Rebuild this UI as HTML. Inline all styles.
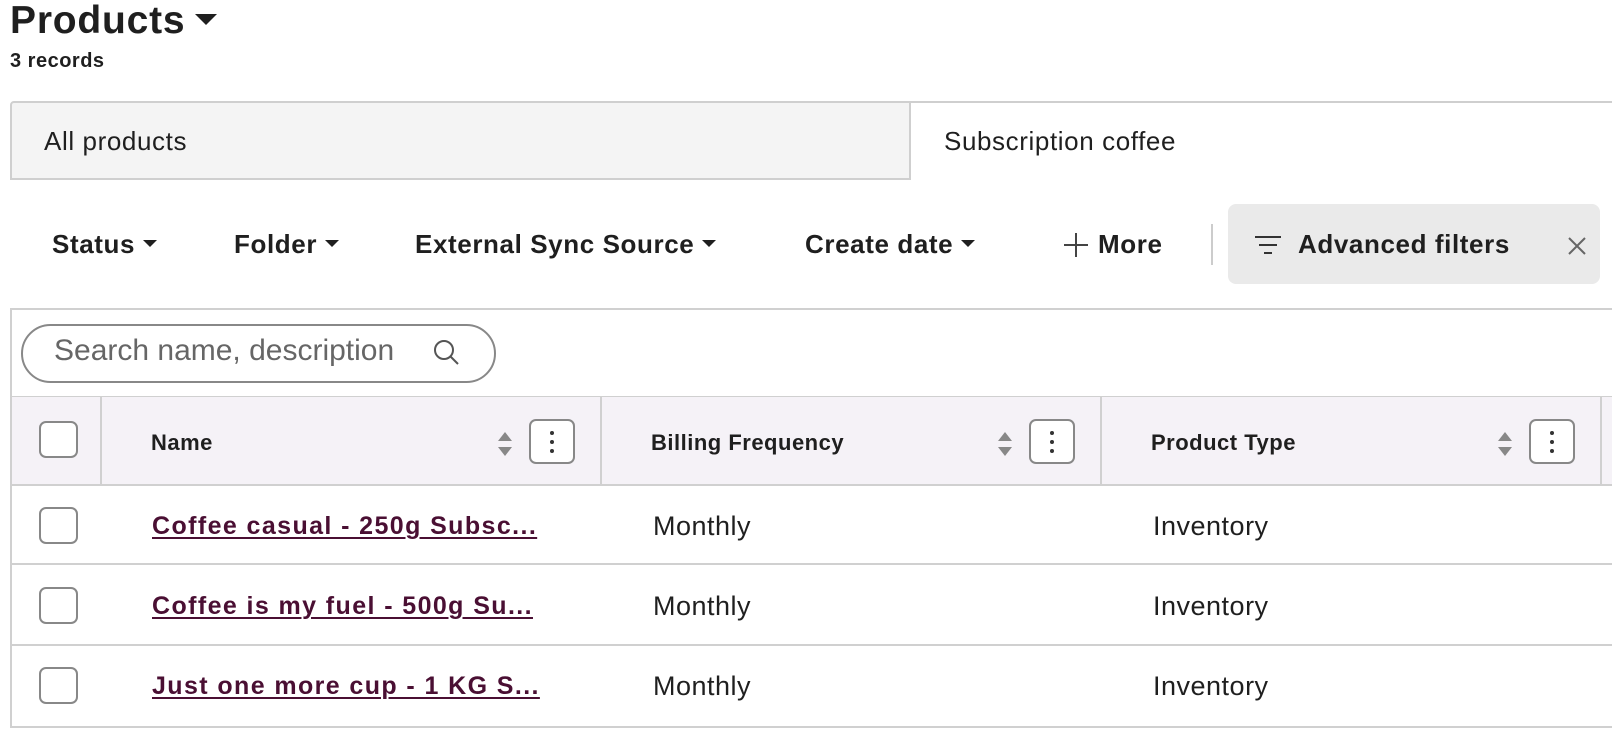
<!DOCTYPE html>
<html><head><meta charset="utf-8"><style>
*{box-sizing:border-box;margin:0;padding:0}
body{width:1612px;height:730px;overflow:hidden;background:#fff;font-family:"Liberation Sans",sans-serif;color:#1f1f1f;position:relative}
.a{position:absolute;white-space:nowrap}
.caret{display:inline-block;width:0;height:0;border-left:7px solid transparent;border-right:7px solid transparent;border-top:7px solid #1f1f1f;vertical-align:middle;margin-left:8px;position:relative;top:-3px}
.f{font-weight:bold;font-size:26px;top:229px;letter-spacing:0.6px}
.cb{position:absolute;width:39px;height:37px;border:2px solid #888;border-radius:7px;background:#fff}
.th{position:absolute;top:397px;height:87px;background:#f5f2f7;border-right:2px solid #d0d0d0}
.hl{position:absolute;font-weight:bold;font-size:22px;top:430px;letter-spacing:0.5px}
.sort{position:absolute;top:430px;width:14px;height:28px}
.dots{position:absolute;top:419px;width:46px;height:45px;border:2px solid #888;border-radius:7px;background:#fff}
.dots i{position:absolute;left:19px;width:4px;height:4px;border-radius:2px;background:#333}
.lnk{position:absolute;left:152px;font-weight:bold;font-size:25px;letter-spacing:1.4px;color:#4a0f33;text-decoration:underline;text-decoration-thickness:2px;text-underline-offset:3px}
.t{position:absolute;font-size:27px;letter-spacing:0.5px}
.hr{position:absolute;left:10px;width:1602px;height:2px;background:#d0d0d0}
</style></head><body>
<div class="a" style="left:10px;top:0;font-size:39px;font-weight:bold;line-height:42px;letter-spacing:0.8px">Products<span class="caret" style="border-left-width:11px;border-right-width:11px;border-top-width:11px;margin-left:10px"></span></div>
<div class="a" style="left:10px;top:50px;font-size:20px;font-weight:bold;letter-spacing:0.5px">3 records</div>

<div class="a" style="left:10px;top:101px;width:901px;height:79px;background:#f4f4f4;border:2px solid #cfcfcf;border-radius:4px 0 0 0"></div>
<div class="a" style="left:910px;top:101px;width:702px;height:2px;background:#cfcfcf"></div>
<div class="a" style="left:44px;top:126px;font-size:26px;letter-spacing:0.6px">All products</div>
<div class="a" style="left:944px;top:126px;font-size:26px;letter-spacing:0.6px">Subscription coffee</div>

<div class="a f" style="left:52px">Status<span class="caret"></span></div>
<div class="a f" style="left:234px">Folder<span class="caret"></span></div>
<div class="a f" style="left:415px">External Sync Source<span class="caret"></span></div>
<div class="a f" style="left:805px">Create date<span class="caret"></span></div>
<svg class="a" style="left:1063px;top:232px" width="26" height="26"><path d="M13 1V25M1 13H25" stroke="#444" stroke-width="2"/></svg>
<div class="a f" style="left:1098px">More</div>
<div class="a" style="left:1211px;top:224px;width:2px;height:41px;background:#ccc"></div>
<div class="a" style="left:1228px;top:204px;width:372px;height:80px;background:#eaeaea;border-radius:8px"></div>
<svg class="a" style="left:1254px;top:234px" width="28" height="22"><path d="M1 3h26M5 11h18M10 19h8" stroke="#333" stroke-width="2"/></svg>
<div class="a f" style="left:1298px">Advanced filters</div>
<svg class="a" style="left:1567px;top:236px" width="20" height="20"><path d="M2 2L18 18M18 2L2 18" stroke="#666" stroke-width="2"/></svg>

<div class="a" style="left:10px;top:308px;width:1604px;height:420px;border:2px solid #d0d0d0;border-right:none"></div>
<div class="a" style="left:21px;top:324px;width:475px;height:59px;border:2px solid #888;border-radius:30px"></div>
<div class="a" style="left:54px;top:334px;font-size:30px;color:#666;width:352px;overflow:hidden">Search name, description</div>
<svg class="a" style="left:432px;top:338px" width="30" height="30"><circle cx="12" cy="12" r="9" fill="none" stroke="#555" stroke-width="2"/><path d="M18.5 18.5L26 26" stroke="#555" stroke-width="2"/></svg>

<div class="hr" style="top:396px"></div>
<div class="th" style="left:12px;width:90px"></div>
<div class="th" style="left:102px;width:500px"></div>
<div class="th" style="left:602px;width:500px"></div>
<div class="th" style="left:1102px;width:500px"></div>
<div class="th" style="left:1602px;width:12px;border:none"></div>
<div class="cb" style="left:39px;top:421px"></div>
<div class="hl" style="left:151px">Name</div>
<div class="hl" style="left:651px">Billing Frequency</div>
<div class="hl" style="left:1151px">Product Type</div>
<svg class="sort" style="left:498px"><path d="M0 11L7 2L14 11zM0 17L7 26L14 17z" fill="#888"/></svg>
<svg class="sort" style="left:998px"><path d="M0 11L7 2L14 11zM0 17L7 26L14 17z" fill="#888"/></svg>
<svg class="sort" style="left:1498px"><path d="M0 11L7 2L14 11zM0 17L7 26L14 17z" fill="#888"/></svg>
<div class="dots" style="left:529px"><i style="top:10px"></i><i style="top:19px"></i><i style="top:28px"></i></div>
<div class="dots" style="left:1029px"><i style="top:10px"></i><i style="top:19px"></i><i style="top:28px"></i></div>
<div class="dots" style="left:1529px"><i style="top:10px"></i><i style="top:19px"></i><i style="top:28px"></i></div>

<div class="hr" style="top:484px"></div>
<div class="hr" style="top:563px"></div>
<div class="hr" style="top:644px"></div>

<div class="cb" style="left:39px;top:507px"></div>
<div class="cb" style="left:39px;top:587px"></div>
<div class="cb" style="left:39px;top:667px"></div>
<div class="lnk" style="top:512px">Coffee casual - 250g Subsc...</div>
<div class="lnk" style="top:592px">Coffee is my fuel - 500g Su...</div>
<div class="lnk" style="top:672px">Just one more cup - 1 KG S...</div>
<div class="t" style="left:653px;top:511px">Monthly</div>
<div class="t" style="left:653px;top:591px">Monthly</div>
<div class="t" style="left:653px;top:671px">Monthly</div>
<div class="t" style="left:1153px;top:511px">Inventory</div>
<div class="t" style="left:1153px;top:591px">Inventory</div>
<div class="t" style="left:1153px;top:671px">Inventory</div>
</body></html>
